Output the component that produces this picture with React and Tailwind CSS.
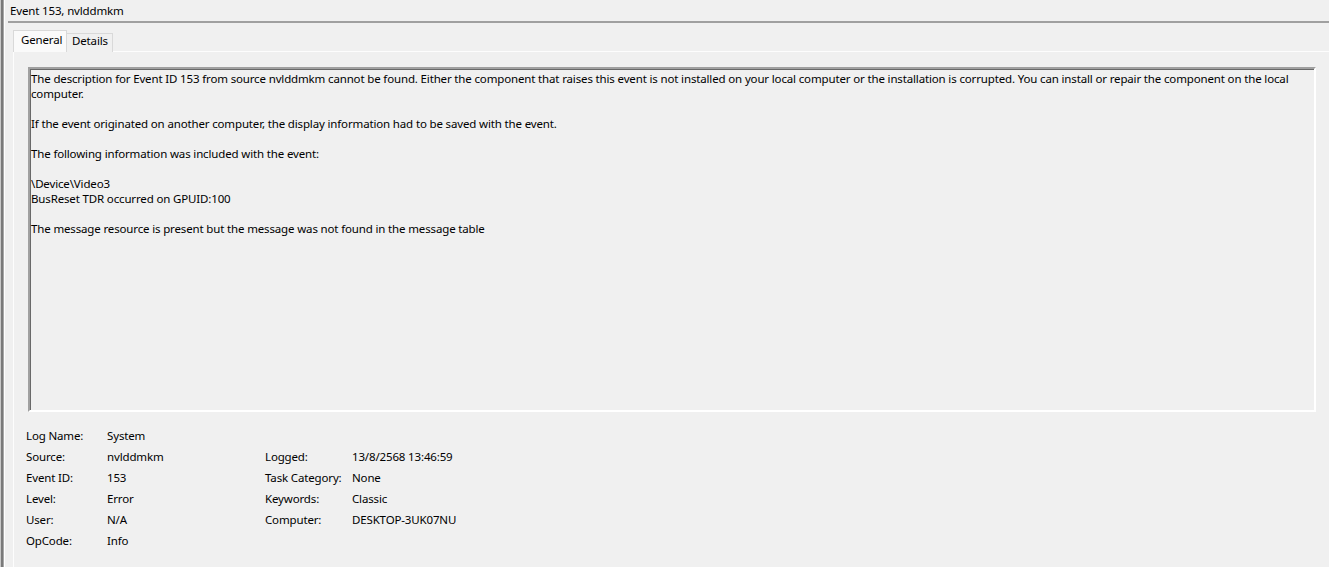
import React from "react";

const lines = [
  "The description for Event ID 153 from source nvlddmkm cannot be found. Either the component that raises this event is not installed on your local computer or the installation is corrupted. You can install or repair the component on the local computer.",
  "",
  "If the event originated on another computer, the display information had to be saved with the event.",
  "",
  "The following information was included with the event:",
  "",
  "\\Device\\Video3",
  "BusReset TDR occurred on GPUID:100",
  "",
  "The message resource is present but the message was not found in the message table",
];

const left = [
  ["Log Name:", "System"],
  ["Source:", "nvlddmkm"],
  ["Event ID:", "153"],
  ["Level:", "Error"],
  ["User:", "N/A"],
  ["OpCode:", "Info"],
];

const right = [
  ["", ""],
  ["Logged:", "13/8/2568 13:46:59"],
  ["Task Category:", "None"],
  ["Keywords:", "Classic"],
  ["Computer:", "DESKTOP-3UK07NU"],
];

const font = { fontFamily: "'Noto Sans', 'Open Sans', sans-serif" };

export default function App() {
  return (
    <div className="flex h-[567px] w-full bg-[#f0f0f0] text-[11.5px] tracking-[-0.15px] text-black overflow-hidden" style={font}>
      {/* window frame edge */}
      <div className="w-px bg-[#c8c8c8]" />
      <div className="w-[2px] bg-[#7a7a7a]" />
      <div className="w-px bg-[#a8a8a8]" />
      <div className="w-px bg-white" />

      <div className="flex-1 flex flex-col min-w-0">
        <div className="h-[21px] pl-[5px] pt-[3px] leading-[15px]">Event 153, nvlddmkm</div>
        <div className="ml-[3px] h-[2px] bg-[#a0a0a0]" />

        <div className="flex flex-col flex-1 pl-[8px] pt-[7px]">
          <div className="flex items-end h-[22px] relative z-10">
            <div className="h-[22px] pl-[7px] pt-[1px] bg-[#fafafa] border border-b-0 border-[#d9d9d9] leading-[15px] w-[54px]">
              General
            </div>
            <div className="h-[19px] pl-[5px] bg-[#f0f0f0] border border-l-0 border-b-0 border-[#d9d9d9] leading-[14px] w-[46px]">
              Details
            </div>
          </div>
          <div className="flex-1 -mt-px border-t border-l border-[#fdfdfd] flex flex-col pl-[14px] pr-[13px] pt-[15px]">
            <div className="h-[345px] border-t-2 border-l-2 border-t-[#a0a0a0] border-l-[#a0a0a0] border-b-2 border-r-2 border-b-white border-r-white">
              <div className="h-full border-t border-l border-[#696969] border-b-0 border-r-0 bg-[#f0f0f0] pt-[1px] leading-[15px]">
                {lines.map((l, i) => (
                  <div key={i} className="min-h-[15px]">{l}</div>
                ))}
              </div>
            </div>

            <div className="flex mt-[16px] -ml-[2px] leading-[15px]">
              <div className="w-[239px] flex flex-col gap-[6px]">
                {left.map(([k, v]) => (
                  <div key={k} className="flex h-[15px]">
                    <span className="w-[81px]">{k}</span>
                    <span>{v}</span>
                  </div>
                ))}
              </div>
              <div className="flex flex-col gap-[6px]">
                {right.map(([k, v], i) => (
                  <div key={i} className="flex h-[15px]">
                    <span className="w-[87px]">{k}</span>
                    <span>{v}</span>
                  </div>
                ))}
              </div>
            </div>
          </div>
        </div>
      </div>
    </div>
  );
}
